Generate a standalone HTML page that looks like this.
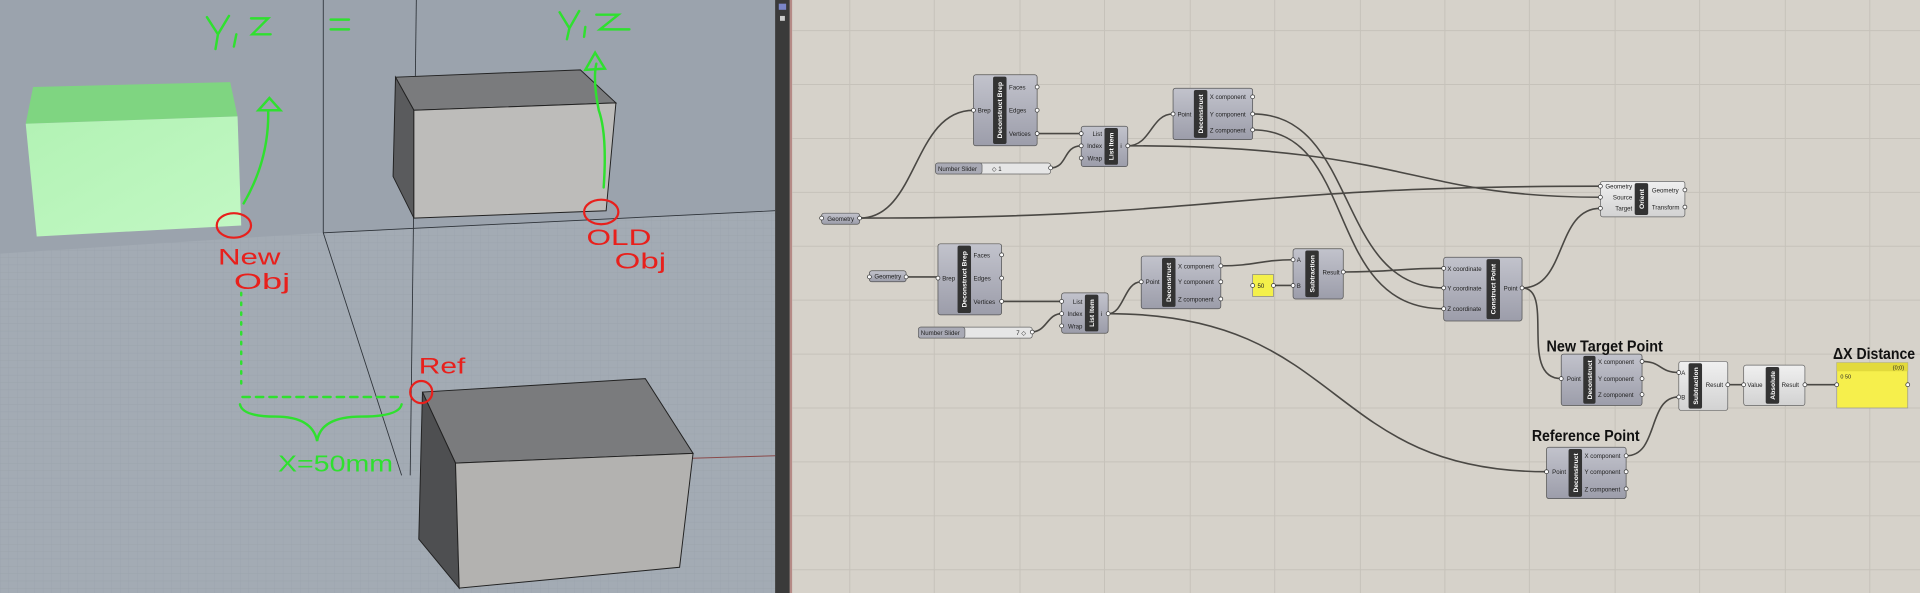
<!DOCTYPE html>
<html><head><meta charset="utf-8"><style>
html,body{margin:0;padding:0;background:#d6d2ca;overflow:hidden}
svg{display:block}
text{font-family:"Liberation Sans",sans-serif}
</style></head><body>
<svg width="1920" height="593" viewBox="0 0 1568 484" preserveAspectRatio="none" xmlns="http://www.w3.org/2000/svg">
<defs>
<pattern id="fg" width="7" height="6" patternUnits="userSpaceOnUse"><path d="M0 0H7M0 0V6" stroke="#8e97a1" stroke-width=".5" fill="none" opacity=".45"/></pattern>
<linearGradient id="cg" x1="0" y1="0" x2="0" y2="1"><stop offset="0" stop-color="#c2c3cc"/><stop offset="1" stop-color="#9c9daa"/></linearGradient>
<linearGradient id="cw" x1="0" y1="0" x2="0" y2="1"><stop offset="0" stop-color="#f0f0f0"/><stop offset="1" stop-color="#d2d2d2"/></linearGradient>
<linearGradient id="gf" x1="0" y1="0" x2="1" y2="1"><stop offset="0" stop-color="#b2f2b4"/><stop offset="1" stop-color="#c2f8c4"/></linearGradient>
</defs>
<rect x="0" y="0" width="633" height="484" fill="#9ba3ad"/>
<path d="M0 207 L264 190 L633 172 L633 484 L0 484 Z" fill="#a3abb4"/>
<path d="M0 207 L264 190 L633 172 L633 484 L0 484 Z" fill="url(#fg)"/>
<g stroke="#2d3238" stroke-width=".7" fill="none">
<path d="M264 0 V190 L328 388"/>
<path d="M340 0 L335 388"/>
<path d="M264 190 L633 172"/>
</g>
<path d="M565 374 L633 372" stroke="#8a4a4a" stroke-width=".8"/>
<polygon points="27,71 188,67 194,95 21,101" fill="#7fd581"/>
<polygon points="21,101 194,95 197,184 30,193" fill="url(#gf)"/>
<g stroke="#222" stroke-width=".8">
<polygon points="323,63 474,57 503,84 338,90" fill="#7a7b7d"/>
<polygon points="323,63 338,90 338,178 321,144" fill="#5a5b5d"/>
<polygon points="338,90 503,84 495,172 338,178" fill="#bdbcba"/>
<polygon points="345,320 527,309 566,370 372,378" fill="#7a7b7d"/>
<polygon points="345,320 372,378 375,480 342,440" fill="#4e4f51"/>
<polygon points="372,378 566,370 555,463 375,480" fill="#b3b2b0"/>
</g>
<g stroke="#2fe02f" stroke-width="2" fill="none" stroke-linecap="round">
<path d="M199 166 Q220 130 219 90"/><path d="M211 90 L220 80 L229 90 Z"/>
<path d="M493 153 Q496 110 489 90 Q484 65 487 52"/><path d="M478 57 L486 43 L494 56 Z"/>
<path d="M197 239 V319" stroke-dasharray="2 6"/>
<path d="M198 324 H328" stroke-dasharray="6 5"/>
<path d="M196 330 Q198 340 225 340 Q255 340 259 360 Q262 340 295 340 Q326 340 328 330"/>
<path d="M169 14 L178 28 L187 13 M178 28 L176 40 M193 28 L191 38 M205 15 H219 L206 28 H221"/>
<path d="M270 16 H285 M270 24 H285"/>
<path d="M457 10 L465 23 L473 9 M465 23 L463 32 M478 22 L477 30 M487 12 H505 L490 24 H514"/>
</g>
<text x="227" y="385" font-size="19" fill="#2fe02f" font-family="DejaVu Sans,sans-serif" textLength="94" lengthAdjust="spacingAndGlyphs">X=50mm</text>
<g stroke="#e8201c" stroke-width="1.8" fill="none">
<ellipse cx="191" cy="184" rx="14" ry="10"/>
<ellipse cx="491" cy="173" rx="14" ry="10"/>
<circle cx="344" cy="320" r="9"/>
</g>
<g fill="#e8201c" font-family="DejaVu Sans,sans-serif">
<text x="178" y="216" font-size="18" textLength="51" lengthAdjust="spacingAndGlyphs">New</text>
<text x="191" y="236" font-size="18" textLength="46" lengthAdjust="spacingAndGlyphs">Obj</text>
<text x="479" y="200" font-size="18" textLength="53" lengthAdjust="spacingAndGlyphs">OLD</text>
<text x="502" y="219" font-size="18" textLength="42" lengthAdjust="spacingAndGlyphs">Obj</text>
<text x="342" y="305" font-size="18" textLength="38" lengthAdjust="spacingAndGlyphs">Ref</text>
</g>
<rect x="633" y="0" width="12" height="484" fill="#3a3a3a"/>
<rect x="636" y="3" width="6" height="5" fill="#7b86c8"/>
<rect x="637" y="13" width="4" height="4" fill="#ccc"/>
<rect x="645" y="0" width="2" height="484" fill="#b58a86"/>
<rect x="647" y="0" width="921" height="484" fill="#d6d2ca"/>
<g stroke="#c6c2ba" stroke-width=".8">
<path d="M694 0V484M763 0V484M833 0V484M902 0V484M972 0V484M1041 0V484M1111 0V484M1180 0V484M1249 0V484M1319 0V484M1388 0V484M1458 0V484M1527 0V484"/>
<path d="M647 25H1568M647 69H1568M647 113H1568M647 157H1568M647 201H1568M647 245H1568M647 289H1568M647 333H1568M647 377H1568M647 421H1568M647 465H1568"/>
</g>
<g stroke="#4a4844" stroke-width="1.3" fill="none">
<path d="M702 178 C750 178 745 90 795 90"/>
<path d="M702 178 C1000 178 1000 152 1307 152"/>
<path d="M847 109 H883"/>
<path d="M858 137 C872 137 868 119 883 119"/>
<path d="M921 119 C940 119 940 93 958 93"/>
<path d="M921 119 C1150 119 1150 161 1307 161"/>
<path d="M1023 93 C1110 93 1090 235 1179 235"/>
<path d="M1023 106 C1110 106 1080 252 1179 252"/>
<path d="M740 226 H766"/>
<path d="M818 246 H867"/>
<path d="M842 271 C855 271 855 256 867 256"/>
<path d="M905 256 C918 256 918 230 932 230"/>
<path d="M905 256 C1100 256 1080 385 1263 385"/>
<path d="M997 217 C1025 217 1030 212 1056 212"/>
<path d="M1040 233 H1056"/>
<path d="M1097 222 C1140 222 1140 219 1179 219"/>
<path d="M1243 235 C1280 235 1270 170 1307 170"/>
<path d="M1243 235 C1270 235 1240 309 1275 309"/>
<path d="M1341 295 C1357 295 1355 304 1371 304"/>
<path d="M1328 372 C1355 372 1345 324 1371 324"/>
<path d="M1411 314 H1424"/>
<path d="M1474 314 H1500"/>
</g>
<g font-size="5" fill="#222">
<rect x="671" y="174" width="31" height="9" rx="2" fill="url(#cg)" stroke="#555" stroke-width=".6"/><text x="686.5" y="180.5" text-anchor="middle">Geometry</text>
<rect x="710" y="221" width="30" height="9" rx="2" fill="url(#cg)" stroke="#555" stroke-width=".6"/><text x="725" y="227.5" text-anchor="middle">Geometry</text>
<rect x="764" y="133" width="94" height="9" rx="2" fill="#e6e6e6" stroke="#666" stroke-width=".6"/><rect x="764" y="133" width="38" height="9" rx="2" fill="#a9aab5" stroke="#666" stroke-width=".6"/><text x="766" y="139.5">Number Slider</text><text x="810" y="139.5">◇ 1</text>
<rect x="750" y="267" width="93" height="9" rx="2" fill="#e6e6e6" stroke="#666" stroke-width=".6"/><rect x="750" y="267" width="38" height="9" rx="2" fill="#a9aab5" stroke="#666" stroke-width=".6"/><text x="752" y="273.5">Number Slider</text><text x="830" y="273.5">7 ◇</text>
<rect x="795" y="61" width="52" height="58" rx="2" fill="url(#cg)" stroke="#555" stroke-width=".6"/>
<rect x="811" y="62.5" width="11" height="55" rx="1.5" fill="#333"/>
<text transform="translate(818.5 90) rotate(-90)" text-anchor="middle" font-size="5.5" font-weight="bold" fill="#fff">Deconstruct Brep</text>
<text x="809" y="92" text-anchor="end">Brep</text><text x="824" y="73">Faces</text><text x="824" y="92">Edges</text><text x="824" y="111">Vertices</text>
<rect x="883" y="103" width="38" height="33" rx="2" fill="url(#cg)" stroke="#555" stroke-width=".6"/>
<rect x="902" y="104.5" width="11" height="30" rx="1.5" fill="#333"/>
<text transform="translate(909.5 119.5) rotate(-90)" text-anchor="middle" font-size="5.5" font-weight="bold" fill="#fff">List Item</text>
<text x="900" y="111" text-anchor="end">List</text><text x="900" y="121" text-anchor="end">Index</text><text x="900" y="131" text-anchor="end">Wrap</text><text x="915" y="121">i</text>
<rect x="958" y="72" width="65" height="42" rx="2" fill="url(#cg)" stroke="#555" stroke-width=".6"/>
<rect x="975" y="73.5" width="11" height="39" rx="1.5" fill="#333"/>
<text transform="translate(982.5 93) rotate(-90)" text-anchor="middle" font-size="5.5" font-weight="bold" fill="#fff">Deconstruct</text>
<text x="973" y="95" text-anchor="end">Point</text><text x="988" y="81">X component</text><text x="988" y="95">Y component</text><text x="988" y="108">Z component</text>
<rect x="766" y="199" width="52" height="58" rx="2" fill="url(#cg)" stroke="#555" stroke-width=".6"/>
<rect x="782" y="200.5" width="11" height="55" rx="1.5" fill="#333"/>
<text transform="translate(789.5 228) rotate(-90)" text-anchor="middle" font-size="5.5" font-weight="bold" fill="#fff">Deconstruct Brep</text>
<text x="780" y="229" text-anchor="end">Brep</text><text x="795" y="210">Faces</text><text x="795" y="229">Edges</text><text x="795" y="248">Vertices</text>
<rect x="867" y="239" width="38" height="33" rx="2" fill="url(#cg)" stroke="#555" stroke-width=".6"/>
<rect x="886" y="240.5" width="11" height="30" rx="1.5" fill="#333"/>
<text transform="translate(893.5 255.5) rotate(-90)" text-anchor="middle" font-size="5.5" font-weight="bold" fill="#fff">List Item</text>
<text x="884" y="248" text-anchor="end">List</text><text x="884" y="258" text-anchor="end">Index</text><text x="884" y="268" text-anchor="end">Wrap</text><text x="899" y="258">i</text>
<rect x="932" y="209" width="65" height="43" rx="2" fill="url(#cg)" stroke="#555" stroke-width=".6"/>
<rect x="949" y="210.5" width="11" height="40" rx="1.5" fill="#333"/>
<text transform="translate(956.5 230.5) rotate(-90)" text-anchor="middle" font-size="5.5" font-weight="bold" fill="#fff">Deconstruct</text>
<text x="947" y="232" text-anchor="end">Point</text><text x="962" y="219">X component</text><text x="962" y="232">Y component</text><text x="962" y="246">Z component</text>
<rect x="1023" y="224" width="17" height="18" fill="#f4f04a" stroke="#888" stroke-width=".6"/><text x="1027" y="235">50</text>
<rect x="1056" y="203" width="41" height="41" rx="2" fill="url(#cg)" stroke="#555" stroke-width=".6"/>
<rect x="1066" y="204.5" width="11" height="38" rx="1.5" fill="#333"/>
<text transform="translate(1073.5 223.5) rotate(-90)" text-anchor="middle" font-size="5.5" font-weight="bold" fill="#fff">Subtraction</text>
<text x="1059" y="214">A</text><text x="1059" y="235">B</text><text x="1080" y="224">Result</text>
<rect x="1179" y="210" width="64" height="52" rx="2" fill="url(#cg)" stroke="#555" stroke-width=".6"/>
<rect x="1214" y="211.5" width="11" height="49" rx="1.5" fill="#333"/>
<text transform="translate(1221.5 236) rotate(-90)" text-anchor="middle" font-size="5.5" font-weight="bold" fill="#fff">Construct Point</text>
<text x="1182" y="221">X coordinate</text><text x="1182" y="237">Y coordinate</text><text x="1182" y="254">Z coordinate</text><text x="1228" y="237">Point</text>
<rect x="1307" y="148" width="69" height="29" rx="2" fill="url(#cw)" stroke="#666" stroke-width=".6"/>
<rect x="1335" y="149.5" width="11" height="26" rx="1.5" fill="#333"/>
<text transform="translate(1342.5 162.5) rotate(-90)" text-anchor="middle" font-size="5.5" font-weight="bold" fill="#fff">Orient</text>
<text x="1333" y="154" text-anchor="end">Geometry</text><text x="1333" y="163" text-anchor="end">Source</text><text x="1333" y="172" text-anchor="end">Target</text><text x="1349" y="157">Geometry</text><text x="1349" y="171">Transform</text>
<rect x="1275" y="289" width="66" height="42" rx="2" fill="url(#cg)" stroke="#555" stroke-width=".6"/>
<rect x="1293" y="290.5" width="10" height="39" rx="1.5" fill="#333"/>
<text transform="translate(1300 310) rotate(-90)" text-anchor="middle" font-size="5.5" font-weight="bold" fill="#fff">Deconstruct</text>
<text x="1291" y="311" text-anchor="end">Point</text><text x="1305" y="297">X component</text><text x="1305" y="311">Y component</text><text x="1305" y="324">Z component</text>
<rect x="1371" y="295" width="40" height="40" rx="2" fill="url(#cw)" stroke="#666" stroke-width=".6"/>
<rect x="1379" y="296.5" width="11" height="37" rx="1.5" fill="#333"/>
<text transform="translate(1386.5 315) rotate(-90)" text-anchor="middle" font-size="5.5" font-weight="bold" fill="#fff">Subtraction</text>
<text x="1373" y="306">A</text><text x="1373" y="326">B</text><text x="1393" y="316">Result</text>
<rect x="1424" y="298" width="50" height="33" rx="2" fill="url(#cw)" stroke="#666" stroke-width=".6"/>
<rect x="1442" y="299.5" width="11" height="30" rx="1.5" fill="#333"/>
<text transform="translate(1449.5 314.5) rotate(-90)" text-anchor="middle" font-size="5.5" font-weight="bold" fill="#fff">Absolute</text>
<text x="1427" y="316">Value</text><text x="1455" y="316">Result</text>
<rect x="1500" y="296" width="58" height="37" fill="#f6ef4c" stroke="#999" stroke-width=".6"/>
<rect x="1500" y="296" width="58" height="7" fill="#e2da3c"/>
<text x="1555" y="301.5" text-anchor="end" font-size="4.5">{0;0}</text><text x="1503" y="309" font-size="4.5">0  50</text>
<rect x="1263" y="365" width="65" height="42" rx="2" fill="url(#cg)" stroke="#555" stroke-width=".6"/>
<rect x="1281" y="366.5" width="11" height="39" rx="1.5" fill="#333"/>
<text transform="translate(1288.5 386) rotate(-90)" text-anchor="middle" font-size="5.5" font-weight="bold" fill="#fff">Deconstruct</text>
<text x="1279" y="387" text-anchor="end">Point</text><text x="1294" y="374">X component</text><text x="1294" y="387">Y component</text><text x="1294" y="401">Z component</text>
</g>
<g fill="#fff" stroke="#333" stroke-width=".6">
<circle cx="702" cy="178" r="1.6"/><circle cx="671" cy="178" r="1.6"/><circle cx="740" cy="226" r="1.6"/><circle cx="710" cy="226" r="1.6"/>
<circle cx="858" cy="137" r="1.6"/><circle cx="843" cy="271" r="1.6"/>
<circle cx="795" cy="90" r="1.6"/><circle cx="847" cy="71" r="1.6"/><circle cx="847" cy="90" r="1.6"/><circle cx="847" cy="109" r="1.6"/>
<circle cx="883" cy="109" r="1.6"/><circle cx="883" cy="119" r="1.6"/><circle cx="883" cy="129" r="1.6"/><circle cx="921" cy="119" r="1.6"/>
<circle cx="958" cy="93" r="1.6"/><circle cx="1023" cy="79" r="1.6"/><circle cx="1023" cy="93" r="1.6"/><circle cx="1023" cy="106" r="1.6"/>
<circle cx="766" cy="227" r="1.6"/><circle cx="818" cy="208" r="1.6"/><circle cx="818" cy="227" r="1.6"/><circle cx="818" cy="246" r="1.6"/>
<circle cx="867" cy="246" r="1.6"/><circle cx="867" cy="256" r="1.6"/><circle cx="867" cy="266" r="1.6"/><circle cx="905" cy="256" r="1.6"/>
<circle cx="932" cy="230" r="1.6"/><circle cx="997" cy="217" r="1.6"/><circle cx="997" cy="230" r="1.6"/><circle cx="997" cy="244" r="1.6"/>
<circle cx="1023" cy="233" r="1.6"/><circle cx="1040" cy="233" r="1.6"/>
<circle cx="1056" cy="212" r="1.6"/><circle cx="1056" cy="233" r="1.6"/><circle cx="1097" cy="222" r="1.6"/>
<circle cx="1179" cy="219" r="1.6"/><circle cx="1179" cy="235" r="1.6"/><circle cx="1179" cy="252" r="1.6"/><circle cx="1243" cy="235" r="1.6"/>
<circle cx="1307" cy="152" r="1.6"/><circle cx="1307" cy="161" r="1.6"/><circle cx="1307" cy="170" r="1.6"/><circle cx="1376" cy="155" r="1.6"/><circle cx="1376" cy="169" r="1.6"/>
<circle cx="1275" cy="309" r="1.6"/><circle cx="1341" cy="295" r="1.6"/><circle cx="1341" cy="309" r="1.6"/><circle cx="1341" cy="322" r="1.6"/>
<circle cx="1371" cy="304" r="1.6"/><circle cx="1371" cy="324" r="1.6"/><circle cx="1411" cy="314" r="1.6"/>
<circle cx="1424" cy="314" r="1.6"/><circle cx="1474" cy="314" r="1.6"/><circle cx="1500" cy="314" r="1.6"/><circle cx="1558" cy="314" r="1.6"/>
<circle cx="1263" cy="385" r="1.6"/><circle cx="1328" cy="372" r="1.6"/><circle cx="1328" cy="385" r="1.6"/><circle cx="1328" cy="399" r="1.6"/>
</g>
<g fill="#111" font-size="12.5" font-weight="bold">
<text x="1263" y="287" textLength="95" lengthAdjust="spacingAndGlyphs">New Target Point</text>
<text x="1251" y="360" textLength="88" lengthAdjust="spacingAndGlyphs">Reference Point</text>
<text x="1497" y="293" textLength="67" lengthAdjust="spacingAndGlyphs">ΔX Distance</text>
</g>
</svg>
</body></html>
